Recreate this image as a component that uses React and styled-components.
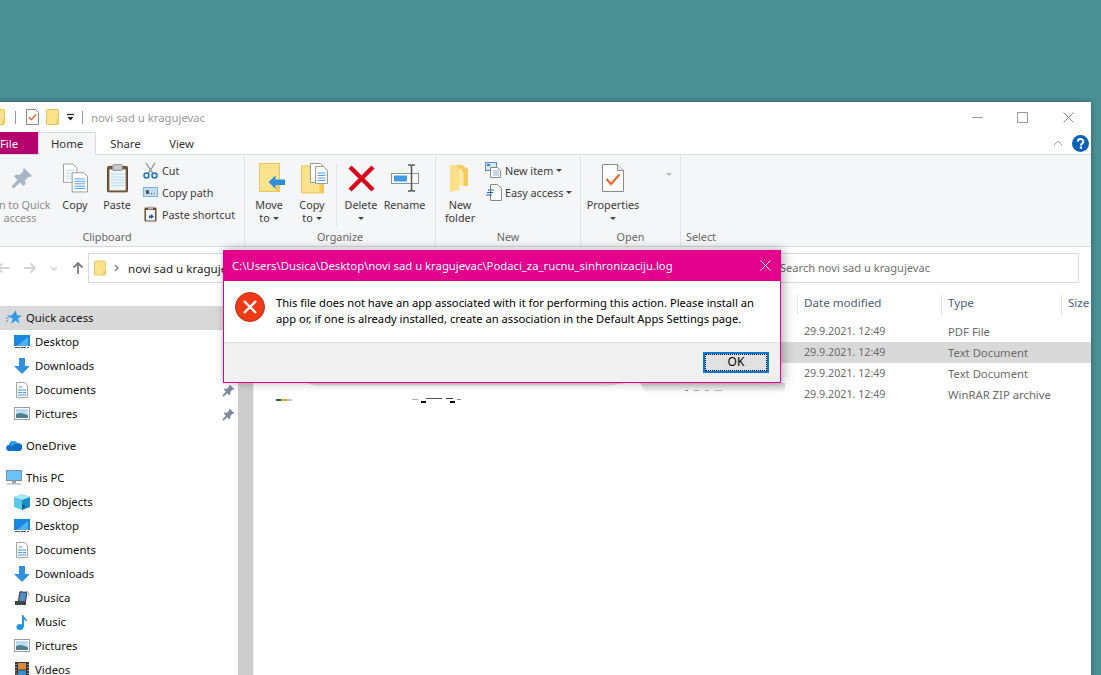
import React from "react";
import styled, { createGlobalStyle } from "styled-components";

const Global = createGlobalStyle`
  html, body { margin: 0; padding: 0; height: 100%; overflow: hidden; }
  body { font-family: "Noto Sans", "Open Sans", sans-serif; font-size: 11.3px; color: #1a1a1a; }
`;

const Desktop = styled.div`
  position: relative;
  width: 1101px;
  height: 675px;
  background: #4a9196;
  overflow: hidden;
`;
const Win = styled.div`
  position: absolute;
  left: -30px;
  top: 102px;
  width: 1121px;
  height: 600px;
  background: #fff;
  display: flex;
  flex-direction: column;
  overflow: hidden;
`;
const WinShadow = styled.div`
  position: absolute;
  left: -30px;
  top: 102px;
  width: 1121px;
  height: 600px;
  box-shadow: 0 0 6px rgba(0, 0, 0, 0.35);
`;

/* title bar */
const TitleBar = styled.div`
  height: 30px;
  display: flex;
  align-items: center;
  padding-left: 22px;
  flex: none;
`;
const Sep = styled.span`
  width: 1px;
  height: 13px;
  background: #9a9a9a;
  margin: 0 ${p => p.$gap || 10}px;
`;
const QuickBtn = styled.span`
  display: flex;
  margin-right: ${p => p.$mr || 0}px;
`;
const WinTitle = styled.span`
  color: #9b9b9b;
  font-size: 11.3px;
  padding-left: 1px;
`;
const WinButtons = styled.div`
  margin-left: auto;
  display: flex;
`;
const WinButton = styled.span`
  width: 45.5px;
  display: flex;
  align-items: center;
  justify-content: center;
`;

/* tabs */
const TabRow = styled.div`
  height: 23px;
  display: flex;
  align-items: stretch;
  flex: none;
  border-bottom: 1px solid #dadbdc;
  box-sizing: border-box;
`;
const FileTab = styled.div`
  width: 68px;
  background: #b5006f;
  color: #fff;
  padding-left: 30px;
  box-sizing: border-box;
  line-height: 23px;
`;
const Tab = styled.div`
  width: ${p => p.$w}px;
  text-align: center;
  line-height: 23px;
  color: #333;
  ${p => p.$active && `
    background: #f5f6f7;
    border: 1px solid #dadbdc;
    border-bottom: 0;
    height: 23px;
    box-sizing: border-box;
    line-height: 22px;
  `}
`;
const HelpWrap = styled.div`
  margin-left: auto;
  display: flex;
  align-items: center;
  gap: 9px;
  padding-right: 2px;
`;

/* ribbon */
const Ribbon = styled.div`
  height: 92px;
  flex: none;
  display: flex;
  background: #f5f6f7;
  border-bottom: 1px solid #dadbdc;
  box-sizing: border-box;
`;
const Group = styled.div`
  width: ${p => p.$w}px;
  flex: none;
  display: flex;
  flex-direction: column;
  margin-top: 2px;
  border-right: ${p => (p.$last ? "0" : "1px solid #e2e3e4")};
  box-sizing: border-box;
  padding-left: ${p => p.$pl || 0}px;
`;
const GroupBody = styled.div`
  flex: 1;
  display: flex;
  align-items: flex-start;
  position: relative;
  padding-top: 1px;
`;
const GroupLabel = styled.div`
  text-align: center;
  color: #666;
  font-size: 10.8px;
  line-height: 14px;
  height: 16px;
  margin-left: ${p => -(p.$pl || 0)}px;
`;
const Large = styled.div`
  width: ${p => p.$w}px;
  flex: none;
  display: flex;
  flex-direction: column;
  align-items: center;
  color: ${p => (p.$dim ? "#8b8b8b" : "#3a3a3a")};
`;
const LargeIcon = styled.div`
  height: 40px;
  display: flex;
  align-items: center;
  justify-content: center;
  margin-left: ${p => p.$shift || 0}px;
`;
const LargeLabel = styled.div`
  text-align: center;
  font-size: 10.8px;
  line-height: 13px;
  white-space: nowrap;
`;
const Caret = styled.i`
  display: inline-block;
  width: 0;
  height: 0;
  border: 3px solid transparent;
  border-top: 3px solid ${p => p.$c || "#444"};
  border-bottom: 0;
  margin-left: ${p => p.$ml || 0}px;
  vertical-align: 2px;
`;
const SmallCol = styled.div`
  display: flex;
  flex-direction: column;
  margin-left: ${p => p.$ml || 0}px;
  padding-top: ${p => p.$pt || 1}px;
`;
const Small = styled.div`
  height: 22px;
  display: flex;
  align-items: center;
  gap: 3px;
  font-size: 10.8px;
  color: #3a3a3a;
  white-space: nowrap;
`;
const SmallIcon = styled.span`
  width: 17px;
  display: flex;
  justify-content: center;
`;
const VLine = styled.span`
  width: 1px;
  height: 62px;
  background: #e2e3e4;
  margin: 6px 1px 0 5px;
`;
const OpenCaret = styled.span`
  position: absolute;
  right: 8px;
  top: 9px;
`;

/* address */
const AddressRow = styled.div`
  height: 47px;
  flex: none;
  display: flex;
  align-items: flex-start;
  padding-top: 6px;
  box-sizing: border-box;
`;
const NavIcons = styled.div`
  width: 118px;
  height: 30px;
  display: flex;
  align-items: center;
  flex: none;
  padding-left: 26px;
  box-sizing: border-box;
  gap: 13px;
`;
const AddressBox = styled.div`
  width: 682px;
  height: 30px;
  flex: none;
  border: 1px solid #d9d9d9;
  box-sizing: border-box;
  display: flex;
  align-items: center;
  padding-left: 5px;
  gap: 8px;
  font-size: 11.6px;
  color: #222;
`;
const SearchBox = styled.div`
  width: 304px;
  height: 30px;
  flex: none;
  margin-left: 5px;
  border: 1px solid #d9d9d9;
  box-sizing: border-box;
  line-height: 28px;
  padding-left: 4px;
  color: #6f6f6f;
  font-size: 11.1px;
`;

/* content */
const Content = styled.div`
  flex: 1;
  display: flex;
  min-height: 0;
`;
const Sidebar = styled.div`
  width: 268px;
  flex: none;
  padding-top: 12px;
  box-sizing: border-box;
`;
const NavRow = styled.div`
  height: 24px;
  display: flex;
  align-items: center;
  position: relative;
  padding-left: ${p => (p.$child ? 44 : 36)}px;
  padding-bottom: 1px;
  box-sizing: border-box;
  margin-top: ${p => p.$mt || 0}px;
  background: ${p => (p.$selected ? "#d9d9d9" : "transparent")};
  gap: ${p => (p.$child ? 5 : 4)}px;
  font-size: 11.3px;
  color: #111;
`;
const NavIcon = styled.span`
  width: 16px;
  height: 16px;
  display: flex;
  align-items: center;
  justify-content: center;
  flex: none;
`;
const NavPin = styled.span`
  position: absolute;
  right: 3px;
  top: 6px;
  display: flex;
`;
const Scrollbar = styled.div`
  width: 15px;
  flex: none;
  background: #cdcdcd;
`;
const List = styled.div`
  flex: 1;
  min-width: 0;
  overflow: hidden;
  position: relative;
  border-left: 1px solid #f0f0f0;
`;
const ListHead = styled.div`
  height: 21px;
  display: flex;
  padding-left: 543px;
  margin-bottom: 6px;
`;
const HeadCell = styled.div`
  width: ${p => p.$w}px;
  flex: none;
  border-left: 1px solid #e5e5e5;
  padding-left: 6px;
  box-sizing: border-box;
  color: #4c607a;
  font-size: 11.6px;
  line-height: 18px;
`;
const FileRow = styled.div`
  height: 21px;
  display: flex;
  padding-left: 550px;
  background: ${p => (p.$selected ? "#d9d9d9" : "transparent")};
  color: #6b6b6b;
  font-size: 11.3px;
  line-height: 21px;
`;
const FileCell = styled.div`
  width: ${p => p.$w}px;
  flex: none;
  font-size: ${p => p.$size || 11.3}px;
`;
const Scrap = styled.span`
  position: absolute;
  left: ${p => p.$x}px;
  top: ${p => p.$y}px;
  width: ${p => p.$w}px;
  height: ${p => p.$h || 2}px;
  background: ${p => p.$c};
`;

/* dialog */
const Dialog = styled.div`
  position: absolute;
  left: 223px;
  top: 250px;
  width: 558px;
  height: 133px;
  border: 1px solid #e3008c;
  box-sizing: border-box;
  background: #fff;
  display: flex;
  flex-direction: column;
  box-shadow: 4px 0 10px rgba(0, 0, 0, 0.22), 0 -2px 8px rgba(0, 0, 0, 0.12);
`;
const DialogShade = styled.div`
  position: absolute;
  left: ${p => p.$x}px;
  top: 383px;
  width: ${p => p.$w}px;
  height: ${p => p.$h}px;
  background: linear-gradient(#cfcfcf, rgba(255, 255, 255, 0));
  clip-path: polygon(0 0, 100% 0, ${p => p.$cut}% 100%, 4% 100%);
`;
const DialogTitle = styled.div`
  height: 30px;
  background: #e3008c;
  color: #fff;
  display: flex;
  align-items: center;
  padding: 0 9px 1px 8px;
  box-sizing: border-box;
  font-size: 11.3px;
  justify-content: space-between;
  flex: none;
`;
const DialogBody = styled.div`
  flex: 1;
  display: flex;
  padding: 11px 0 0 11px;
  gap: 11px;
`;
const DialogText = styled.div`
  font-size: 11.18px;
  line-height: 16px;
  color: #000;
  padding-top: 2.5px;
`;
const DialogFoot = styled.div`
  height: 40px;
  flex: none;
  background: #f0f0f0;
  border-top: 1px solid #dfdfdf;
  box-sizing: border-box;
  display: flex;
  justify-content: flex-end;
  padding: 9px 11px 0 0;
`;
const OkButton = styled.div`
  width: 66px;
  height: 21px;
  border: 2px solid #0078d7;
  box-sizing: border-box;
  background: #e1e1e1;
  outline: 1px dotted #000;
  outline-offset: -3px;
  text-align: center;
  line-height: 16px;
  font-size: 12px;
  color: #000;
`;

/* icons */
const FolderMini = ({ w = 13, h = 16 }) => (
  <svg width={w} height={h} viewBox="0 0 13 16">
    <rect x=".5" y=".5" width="12" height="15" rx="1" fill="#fbe38e" stroke="#e2c35e" />
    <rect x="10" y="10" width="2.5" height="5.5" fill="#f0cf6b" />
  </svg>
);
const PropsMini = () => (
  <svg width="13" height="16" viewBox="0 0 13 16">
    <path d="M.5.5h9l3 3v12H.5z" fill="#fff" stroke="#8a8a8a" />
    <path d="M3 8l2.4 2.6L10 5.5" fill="none" stroke="#e8632a" strokeWidth="1.4" />
  </svg>
);
const DropMini = () => (
  <svg width="9" height="9" viewBox="0 0 9 9">
    <path d="M1 1.5h7" stroke="#222" strokeWidth="1.2" />
    <path d="M1.5 4h6L4.5 7.5z" fill="#222" />
  </svg>
);
const Pin = ({ size = 22, c = "#a9b6c6" }) => (
  <svg width={size} height={size} viewBox="0 0 22 22">
    <path d="M13 1l8 8-2 1-1-.5-4 4 .5 3.5-2 2-3.5-3.5L3 21l-2 0 0-2 5.5-6L3 9.5l2-2 3.5.5 4-4L12 3z" fill={c} />
  </svg>
);
const PageStack = () => (
  <svg width="25" height="30" viewBox="0 0 26 30">
    <path d="M.5.5h10l4 4v15H.5z" fill="#fff" stroke="#9a9a9a" />
    <path d="M3 7h9M3 10h9M3 13h9M3 16h9" stroke="#b5d3f2" />
    <path d="M9.5 9.5h12l4 4v16h-16z" fill="#fff" stroke="#9a9a9a" />
    <path d="M12 16h11M12 18.5h11M12 21h11M12 23.5h11M12 26h11" stroke="#5b9ae6" />
  </svg>
);
const Clipboard = () => (
  <svg width="21" height="30" viewBox="0 0 22 30">
    <rect x=".5" y="3" width="21" height="26.5" rx="1" fill="#7a5a3c" stroke="#5c3f27" />
    <rect x="2.5" y="6" width="17" height="22" fill="#eef5fb" />
    <path d="M4 11h14M4 14h14M4 17h14M4 20h14M4 23h14" stroke="#b9d4ec" />
    <rect x="6" y="1" width="10" height="6" rx="1" fill="#c9c9c9" stroke="#8a8a8a" />
  </svg>
);
const Scissors = () => (
  <svg width="15" height="17" viewBox="0 0 15 17">
    <path d="M3 1l6.5 10M12 1L5.500 11" stroke="#8c8c8c" strokeWidth="1.300" fill="none" />
    <circle cx="3.500" cy="13.500" r="2.500" fill="none" stroke="#1e73be" strokeWidth="1.500" />
    <circle cx="11.500" cy="13.500" r="2.500" fill="none" stroke="#1e73be" strokeWidth="1.500" />
  </svg>
);
const CopyPath = () => (
  <svg width="15" height="10" viewBox="0 0 15 10">
    <rect x=".5" y=".5" width="14" height="9" fill="#bfe0f7" stroke="#7fb2d8" />
    <path d="M3 3l1 4 1-4 1 4M8 6.500h1M10.500 6.500h1" stroke="#222" strokeWidth=".8" fill="none" />
  </svg>
);
const PasteShortcut = () => (
  <svg width="13" height="16" viewBox="0 0 13 16">
    <rect x=".5" y="1.500" width="12" height="14" rx="1" fill="#6b4c30" />
    <rect x="2" y="4" width="9" height="10.500" fill="#f2f6fa" />
    <rect x="4" y=".5" width="5" height="3" fill="#b5b5b5" />
    <path d="M5 12.500V9.500h2V8l3 2.500-3 2.500v-1.500H6.500" fill="#1c5fa8" />
  </svg>
);
const MoveTo = () => (
  <svg width="32" height="30" viewBox="0 0 32 30">
    <rect x="6.500" y=".5" width="20" height="28" fill="#fbe38e" stroke="#e9c65c" />
    <rect x="23" y="20" width="3.500" height="8.500" fill="#efcb62" />
    <path d="M15.500 19l7-6.500v4H32v5.500h-9.500v4z" fill="#2f8fdc" />
  </svg>
);
const CopyTo = () => (
  <svg width="27" height="31" viewBox="0 0 27 31">
    <rect x=".5" y="3" width="22" height="27" fill="#fbe38e" stroke="#e9c65c" />
    <rect x="18.500" y="20" width="4" height="10" fill="#efcb62" />
    <path d="M9.500.5h10l4 4v15h-14z" fill="#fff" stroke="#9a9a9a" />
    <path d="M14.500 3.500h8l4 4v13h-12z" fill="#fff" stroke="#9a9a9a" />
    <path d="M16.500 10h8M16.500 12.500h8M16.500 15h8M16.500 17.500h8" stroke="#5b9ae6" />
  </svg>
);
const DeleteX = () => (
  <svg width="27" height="27" viewBox="0 0 27 27">
    <path d="M2 2l23 23M25 2L2 25" stroke="#d9001b" strokeWidth="4.300" />
  </svg>
);
const Rename = () => (
  <svg width="28" height="28" viewBox="0 0 28 28">
    <rect x=".5" y="9.500" width="27" height="10" fill="#fff" stroke="#8f8f8f" />
    <rect x="3" y="11.500" width="13" height="6" fill="#3f9be8" />
    <path d="M17 1h2.500l1 1 1-1H24M20.500 2v24M17 27h2.500l1-1 1 1H24" stroke="#555" strokeWidth="1.500" fill="none" />
  </svg>
);
const NewFolder = () => (
  <svg width="20" height="28" viewBox="0 0 20 28">
    <path d="M0 1h9l9 3v18l-9 0 0 4-9 2z" fill="#fbe08a" />
    <path d="M6 1h6l6 5v16h-4V9z" fill="#f6cb5e" />
    <path d="M10 5h2v17h-2z" fill="#fdeeb5" />
  </svg>
);
const NewItem = () => (
  <svg width="17" height="16" viewBox="0 0 17 16">
    <rect x=".5" y=".5" width="11" height="8" fill="#d7e8f7" stroke="#5c87b3" />
    <rect x="2" y="2" width="3" height="2" fill="#3c78b8" />
    <path d="M5.500 5.500h7l3 3v7h-10z" fill="#fff" stroke="#888" />
    <path d="M8 9h6M8 11h6M8 13h6" stroke="#8fa8d8" />
  </svg>
);
const EasyAccess = () => (
  <svg width="16" height="17" viewBox="0 0 16 17">
    <path d="M4.500.5h7l4 4v12h-11z" fill="#fff" stroke="#8a8a8a" />
    <path d="M2 6h6M1 8.500h6M0 11h6" stroke="#1c62a8" />
  </svg>
);
const Properties = () => (
  <svg width="22" height="28" viewBox="0 0 22 28">
    <path d="M.5.500h15l6 6v21H.5z" fill="#fff" stroke="#8a8a8a" />
    <path d="M15.500.500v6h6" fill="#eee" stroke="#8a8a8a" />
    <path d="M4.500 15l4.500 5 8.500-9.500" fill="none" stroke="#eb6a2c" strokeWidth="2.200" />
  </svg>
);
const ArrowNav = ({ dir = "right", c = "#d2d2d2", size = 14 }) => (
  <svg width={size} height={size} viewBox="0 0 14 14" style={{ transform: dir === "left" ? "rotate(180deg)" : dir === "up" ? "rotate(-90deg)" : "none" }}>
    <path d="M1 7h11M7.500 2.500L12 7l-4.500 4.500" fill="none" stroke={c} strokeWidth="1.800" />
  </svg>
);
const ChevronDown = () => (
  <svg width="8" height="5" viewBox="0 0 8 5">
    <path d="M1 1l3 3 3-3" fill="none" stroke="#d0d0d0" strokeWidth="1.200" />
  </svg>
);
const Star = () => (
  <svg width="16" height="16" viewBox="0 0 16 16">
    <path d="M9.500.5l1.600 4.800 4.900.1-4 3 1.500 5-4-3-4.500 3.500 1.800-5.300L.5 5.500l5.400-.1z" fill="#2d9be8" />
    <path d="M0 8h3M0 11h2" stroke="#2d9be8" />
  </svg>
);
const DesktopIcon = () => (
  <svg width="16" height="13" viewBox="0 0 16 13">
    <rect width="16" height="11" fill="#1a87e0" />
    <path d="M3 11L14 2v9z" fill="#4fb1f2" />
    <path d="M1 12.500h14" stroke="#555" strokeDasharray="5 1" />
  </svg>
);
const DownloadIcon = () => (
  <svg width="16" height="16" viewBox="0 0 16 16">
    <path d="M5 0h6v8h5l-8 8-8-8h5z" fill="#2f8fe0" />
  </svg>
);
const DocIcon = () => (
  <svg width="12" height="16" viewBox="0 0 12 16">
    <path d="M.5.500h8l3 3v12H.5z" fill="#fbfbfb" stroke="#a6a6a6" />
    <path d="M3 5h3M2 8h8M2 10.500h4M7 10.500h3M2 13h8" stroke="#4f93c8" />
  </svg>
);
const PictureIcon = () => (
  <svg width="16" height="13" viewBox="0 0 16 13">
    <rect x=".5" y=".5" width="15" height="12" fill="#fff" stroke="#9c9c9c" />
    <rect x="2" y="2" width="12" height="5" fill="#bcdcf3" />
    <path d="M2 7l5-1 7 2v3H2z" fill="#4d7f8a" />
  </svg>
);
const CloudIcon = () => (
  <svg width="16" height="11" viewBox="0 0 16 11">
    <path d="M3.500 11A3 3 0 0 1 3 5a4.500 4.500 0 0 1 8.500-1.500A3.500 3.500 0 0 1 16 8a3 3 0 0 1-3 3z" fill="#0f6cc4" />
    <path d="M3 5a4.500 4.500 0 0 1 8.500-1.500C9 3 7 5 6.500 6 5 5 4 5 3 5z" fill="#2aa4ef" />
  </svg>
);
const PcIcon = () => (
  <svg width="16" height="15" viewBox="0 0 16 15">
    <rect x=".5" y=".5" width="15" height="10" fill="#6cc3f7" stroke="#7d8b96" />
    <path d="M6.500 11h3v2h-3zM1 14h14" stroke="#9aa3aa" fill="#9aa3aa" />
  </svg>
);
const CubeIcon = () => (
  <svg width="16" height="16" viewBox="0 0 16 16">
    <path d="M8 0l8 3v10l-8 3-8-3V3z" fill="#5cc6e6" />
    <path d="M8 6l8-3v10l-8 3z" fill="#1b8fc4" />
    <path d="M0 3l8 3 8-3-8-3z" fill="#a6e6f5" />
    <path d="M8 10l4 2-4 4z" fill="#0d5f94" />
  </svg>
);
const PhoneIcon = () => (
  <svg width="16" height="16" viewBox="0 0 16 16">
    <rect x="5" y="2" width="7" height="12" rx="1" transform="rotate(8 8 8)" fill="#4f8fd0" stroke="#333" />
    <rect x="1" y="11" width="11" height="4" fill="#444" />
    <path d="M11 1.500c3 0 4.500 1.500 4 4" fill="none" stroke="#999" />
  </svg>
);
const MusicIcon = () => (
  <svg width="12" height="16" viewBox="0 0 12 16">
    <ellipse cx="4" cy="13" rx="3.500" ry="3" fill="#1e96ea" />
    <path d="M6 1h1.500c0 3 4 3.500 3.500 7-.800-1.500-2-2-3-2.300V13H6z" fill="#1e96ea" />
  </svg>
);
const VideoIcon = () => (
  <svg width="14" height="16" viewBox="0 0 14 16">
    <rect width="14" height="16" fill="#3a3a3a" />
    <rect x="3" y="1" width="8" height="6.500" fill="#d98a3c" />
    <rect x="3" y="8.500" width="8" height="6.500" fill="#3f8dc9" />
    <path d="M1 2v1M1 5v1M1 8v1M1 11v1M13 2v1M13 5v1M13 8v1M13 11v1" stroke="#ddd" />
  </svg>
);
const ErrorIcon = () => (
  <svg width="30" height="30" viewBox="0 0 30 30">
    <circle cx="15" cy="15" r="14.500" fill="#f03a17" stroke="#b8321a" />
    <path d="M9 9l12 12M21 9L9 21" stroke="#fff" strokeWidth="2.400" />
  </svg>
);
const CloseX = ({ size = 11, c = "#fff", w = 1 }) => (
  <svg width={size} height={size} viewBox="0 0 11 11">
    <path d="M.5.500l10 10M10.500.500l-10 10" stroke={c} strokeWidth={w} />
  </svg>
);
const HelpIcon = () => (
  <svg width="17" height="17" viewBox="0 0 17 17">
    <circle cx="8.500" cy="8.500" r="8.500" fill="#0a62b8" />
    <path d="M5.800 6.500c0-3.300 5.600-3.300 5.600 0 0 2-2.500 2-2.500 4" fill="none" stroke="#fff" strokeWidth="1.900" />
    <rect x="7.800" y="11.500" width="2.200" height="2.200" fill="#fff" />
  </svg>
);
const ChevronUp = () => (
  <svg width="10" height="6" viewBox="0 0 10 6">
    <path d="M1 5l4-4 4 4" fill="none" stroke="#a0a0a0" />
  </svg>
);

const quickItems = [
  { label: "Desktop", icon: <DesktopIcon /> },
  { label: "Downloads", icon: <DownloadIcon /> },
  { label: "Documents", icon: <DocIcon />, pin: true },
  { label: "Pictures", icon: <PictureIcon />, pin: true }
];
const pcItems = [
  { label: "3D Objects", icon: <CubeIcon /> },
  { label: "Desktop", icon: <DesktopIcon /> },
  { label: "Documents", icon: <DocIcon /> },
  { label: "Downloads", icon: <DownloadIcon /> },
  { label: "Dusica", icon: <PhoneIcon /> },
  { label: "Music", icon: <MusicIcon /> },
  { label: "Pictures", icon: <PictureIcon /> },
  { label: "Videos", icon: <VideoIcon /> }
];
const files = [
  { type: "PDF File" },
  { type: "Text Document", selected: true },
  { type: "Text Document" },
  { type: "WinRAR ZIP archive" }
];
// leftovers of the painted-over row at the bottom of the list
const scraps = [
  { x: 22, y: 105, w: 5, c: "#2c6a3c" },
  { x: 27, y: 105, w: 6, c: "#d9a040" },
  { x: 33, y: 105, w: 5, c: "#c8c8c8" },
  { x: 158, y: 105, w: 6, c: "#aaa", h: 1 },
  { x: 167, y: 107, w: 5, c: "#000" },
  { x: 172, y: 104, w: 16, c: "#555", h: 1 },
  { x: 192, y: 104, w: 7, c: "#333", h: 1 },
  { x: 196, y: 107, w: 5, c: "#000" },
  { x: 203, y: 105, w: 4, c: "#888", h: 1 },
  { x: 431, y: 96, w: 3, c: "#777", h: 1 },
  { x: 440, y: 96, w: 5, c: "#999", h: 1 },
  { x: 451, y: 96, w: 4, c: "#999", h: 1 },
  { x: 461, y: 96, w: 7, c: "#aaa", h: 1 }
];

function NavItem({ item, child }) {
  return (
    <NavRow $child={child}>
      <NavIcon>{item.icon}</NavIcon>
      {item.label}
      {item.pin && (
        <NavPin>
          <Pin size={13} c="#7d8a99" />
        </NavPin>
      )}
    </NavRow>
  );
}

export default function App() {
  return (
    <Desktop>
      <Global />
      <WinShadow />
      <Win>
        <TitleBar>
          <QuickBtn>
            <FolderMini />
          </QuickBtn>
          <Sep />
          <QuickBtn $mr={7}>
            <PropsMini />
          </QuickBtn>
          <QuickBtn $mr={7}>
            <FolderMini />
          </QuickBtn>
          <DropMini />
          <Sep $gap={7} />
          <WinTitle>novi sad u kragujevac</WinTitle>
          <WinButtons>
            <WinButton>
              <svg width="11" height="1" viewBox="0 0 11 1">
                <path d="M0 .5h11" stroke="#9a9a9a" />
              </svg>
            </WinButton>
            <WinButton>
              <svg width="11" height="11" viewBox="0 0 11 11">
                <rect x=".5" y=".5" width="10" height="10" fill="none" stroke="#9a9a9a" />
              </svg>
            </WinButton>
            <WinButton>
              <CloseX c="#8a8a8a" />
            </WinButton>
          </WinButtons>
        </TitleBar>

        <TabRow>
          <FileTab>File</FileTab>
          <Tab $active $w={58}>
            Home
          </Tab>
          <Tab $w={59}>Share</Tab>
          <Tab $w={53}>View</Tab>
          <HelpWrap>
            <ChevronUp />
            <HelpIcon />
          </HelpWrap>
        </TabRow>

        <Ribbon>
          <Group $w={275} $pl={17}>
            <GroupBody>
              <Large $w={66} $dim>
                <LargeIcon $shift={3}>
                  <Pin />
                </LargeIcon>
                <LargeLabel>
                  Pin to Quick
                  <br />
                  access
                </LargeLabel>
              </Large>
              <Large $w={44}>
                <LargeIcon>
                  <PageStack />
                </LargeIcon>
                <LargeLabel>Copy</LargeLabel>
              </Large>
              <Large $w={40}>
                <LargeIcon>
                  <Clipboard />
                </LargeIcon>
                <LargeLabel>Paste</LargeLabel>
              </Large>
              <SmallCol $ml={5}>
                <Small>
                  <SmallIcon>
                    <Scissors />
                  </SmallIcon>
                  Cut
                </Small>
                <Small>
                  <SmallIcon>
                    <CopyPath />
                  </SmallIcon>
                  Copy path
                </Small>
                <Small>
                  <SmallIcon>
                    <PasteShortcut />
                  </SmallIcon>
                  Paste shortcut
                </Small>
              </SmallCol>
            </GroupBody>
            <GroupLabel $pl={17}>Clipboard</GroupLabel>
          </Group>

          <Group $w={191}>
            <GroupBody>
              <Large $w={48}>
                <LargeIcon>
                  <MoveTo />
                </LargeIcon>
                <LargeLabel>
                  Move
                  <br />
                  to
                  <Caret $ml={3} />
                </LargeLabel>
              </Large>
              <Large $w={38}>
                <LargeIcon $shift={4}>
                  <CopyTo />
                </LargeIcon>
                <LargeLabel>
                  Copy
                  <br />
                  to
                  <Caret $ml={3} />
                </LargeLabel>
              </Large>
              <VLine />
              <Large $w={46}>
                <LargeIcon>
                  <DeleteX />
                </LargeIcon>
                <LargeLabel>
                  Delete
                  <br />
                  <Caret />
                </LargeLabel>
              </Large>
              <Large $w={41}>
                <LargeIcon>
                  <Rename />
                </LargeIcon>
                <LargeLabel>Rename</LargeLabel>
              </Large>
            </GroupBody>
            <GroupLabel>Organize</GroupLabel>
          </Group>

          <Group $w={145}>
            <GroupBody>
              <Large $w={48}>
                <LargeIcon>
                  <NewFolder />
                </LargeIcon>
                <LargeLabel>
                  New
                  <br />
                  folder
                </LargeLabel>
              </Large>
              <SmallCol $ml={1} $pt={1}>
                <Small>
                  <SmallIcon>
                    <NewItem />
                  </SmallIcon>
                  New item
                  <Caret />
                </Small>
                <Small>
                  <SmallIcon>
                    <EasyAccess />
                  </SmallIcon>
                  Easy access
                  <Caret />
                </Small>
              </SmallCol>
            </GroupBody>
            <GroupLabel>New</GroupLabel>
          </Group>

          <Group $w={100}>
            <GroupBody>
              <Large $w={64}>
                <LargeIcon>
                  <Properties />
                </LargeIcon>
                <LargeLabel>
                  Properties
                  <br />
                  <Caret />
                </LargeLabel>
              </Large>
              <OpenCaret>
                <Caret $c="#bbb" />
              </OpenCaret>
            </GroupBody>
            <GroupLabel>Open</GroupLabel>
          </Group>

          <Group $w={40} $last>
            <GroupBody />
            <GroupLabel>Select</GroupLabel>
          </Group>
        </Ribbon>

        <AddressRow>
          <NavIcons>
            <ArrowNav dir="left" />
            <ArrowNav />
            <ChevronDown />
            <ArrowNav dir="up" c="#7c7c7c" />
          </NavIcons>
          <AddressBox>
            <FolderMini w={12} h={16} />
            <svg width="6" height="8" viewBox="0 0 6 8">
              <path d="M1 1l3 3-3 3" fill="none" stroke="#777" strokeWidth="1.300" />
            </svg>
            novi sad u kragujevac
          </AddressBox>
          <SearchBox>Search novi sad u kragujevac</SearchBox>
        </AddressRow>

        <Content>
          <Sidebar>
            <NavRow $selected>
              <NavIcon>
                <Star />
              </NavIcon>
              Quick access
            </NavRow>
            {quickItems.map(item => (
              <NavItem key={item.label} item={item} child />
            ))}
            <NavRow $mt={8}>
              <NavIcon>
                <CloudIcon />
              </NavIcon>
              OneDrive
            </NavRow>
            <NavRow $mt={8}>
              <NavIcon>
                <PcIcon />
              </NavIcon>
              This PC
            </NavRow>
            {pcItems.map(item => (
              <NavItem key={item.label} item={item} child />
            ))}
          </Sidebar>
          <Scrollbar />
          <List>
            <ListHead>
              <HeadCell $w={144}>Date modified</HeadCell>
              <HeadCell $w={120}>Type</HeadCell>
              <HeadCell $w={30}>Size</HeadCell>
            </ListHead>
            {files.map((f, i) => (
              <FileRow key={i} $selected={f.selected}>
                <FileCell $w={144} $size={10.7}>
                  29.9.2021. 12:49
                </FileCell>
                <FileCell $w={120}>{f.type}</FileCell>
              </FileRow>
            ))}
            {scraps.map((s, i) => (
              <Scrap key={i} $x={s.x} $y={s.y} $w={s.w} $h={s.h} $c={s.c} />
            ))}
          </List>
        </Content>
      </Win>

      <DialogShade $x={306} $w={320} $h={4} $cut={92} />
      <DialogShade $x={640} $w={145} $h={10} $cut={100} />
      <Dialog>
        <DialogTitle>
          C:\Users\Dusica\Desktop\novi sad u kragujevac\Podaci_za_rucnu_sinhronizaciju.log
          <CloseX />
        </DialogTitle>
        <DialogBody>
          <ErrorIcon />
          <DialogText>
            This file does not have an app associated with it for performing this action. Please install an
            <br />
            app or, if one is already installed, create an association in the Default Apps Settings page.
          </DialogText>
        </DialogBody>
        <DialogFoot>
          <OkButton>OK</OkButton>
        </DialogFoot>
      </Dialog>
    </Desktop>
  );
}
